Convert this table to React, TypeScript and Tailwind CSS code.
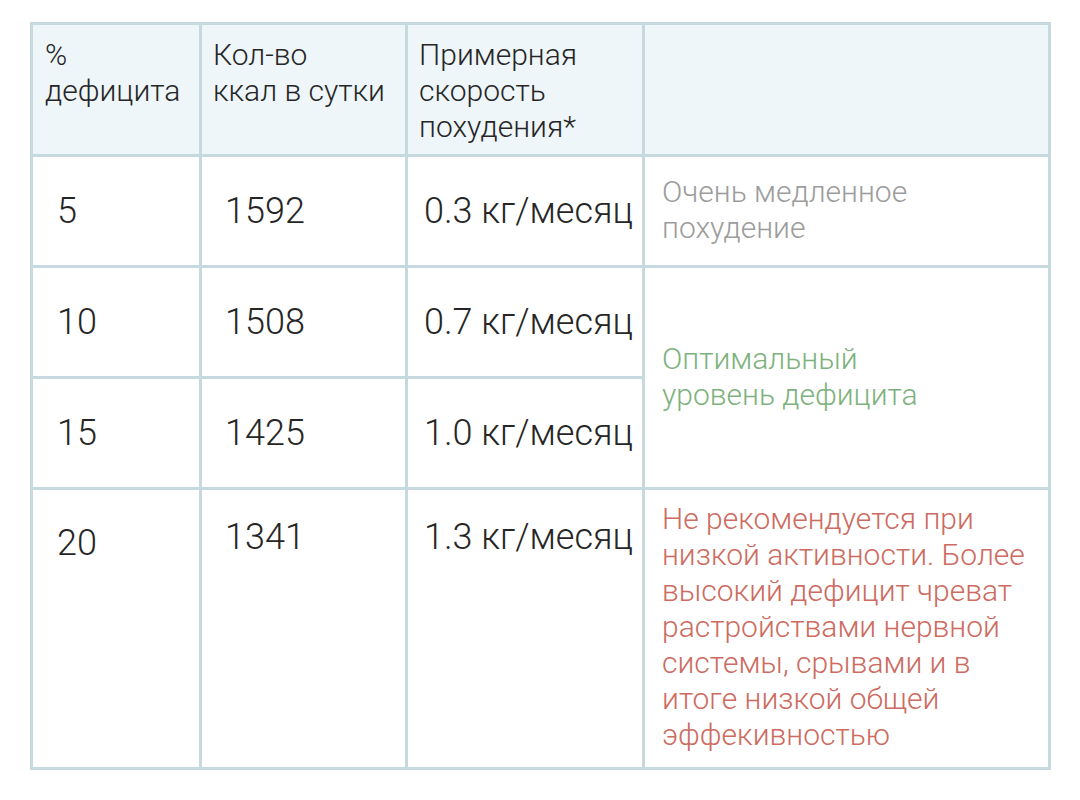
const rows = [
  { pct: "5", kcal: "1592", speed: "0.3 кг/месяц" },
  { pct: "10", kcal: "1508", speed: "0.7 кг/месяц" },
  { pct: "15", kcal: "1425", speed: "1.0 кг/месяц" },
];

const line = "border-[3px] border-[#c6d9df]";

export default function App() {
  return (
    <div className="min-h-[800px] w-[1080px] bg-white pt-[22px] pl-[30px] font-['Roboto',sans-serif] font-light text-[#262626]">
      <table className={`table-fixed w-[1018px] border-collapse ${line}`}>
        <colgroup>
          <col className="w-[169px]" />
          <col className="w-[206px]" />
          <col className="w-[237px]" />
          <col className="w-[406px]" />
        </colgroup>
        <thead>
          <tr className="h-[132px] bg-[#eef6fa] align-top text-left text-[30px] leading-[36px] font-light">
            <th className="border-x-[3px] border-[#c6d9df] pl-[12px] pt-[12px] font-light">
              %<br />дефицита
            </th>
            <th className="border-x-[3px] border-[#c6d9df] pl-[11px] pt-[12px] font-light">
              Кол-во<br />ккал в сутки
            </th>
            <th className="border-x-[3px] border-[#c6d9df] pl-[11px] pt-[12px] font-light">
              Примерная<br />скорость<br />похудения*
            </th>
            <th className="border-x-[3px] border-[#c6d9df]"></th>
          </tr>
        </thead>
        <tbody className="text-[36px] leading-[40px]">
          {rows.map((r, i) => (
            <tr key={r.pct} className="h-[111px] align-middle">
              <td className={`${line} pl-[24px]`}>{r.pct}</td>
              <td className={`${line} pl-[23px]`}>{r.kcal}</td>
              <td className={`${line} pl-[16px] whitespace-nowrap`}>{r.speed}</td>
              {i === 0 && (
                <td className={`${line} pl-[17px] text-[30px] leading-[36px] text-[#9c9c9c]`}>
                  <div className="-mt-[2px]">Очень медленное<br />похудение</div>
                </td>
              )}
              {i === 1 && (
                <td rowSpan={2} className={`${line} pl-[17px] text-[30px] leading-[36px] text-[#7db27d]`}>
                  <div className="-mt-[2px]">Оптимальный<br />уровень дефицита</div>
                </td>
              )}
            </tr>
          ))}
          <tr className="h-[280px] align-top">
            <td className={`${line} pl-[24px] pt-[33px]`}>20</td>
            <td className={`${line} pl-[23px] pt-[27px]`}>1341</td>
            <td className={`${line} pl-[16px] pt-[27px] whitespace-nowrap`}>1.3 кг/месяц</td>
            <td className={`${line} pl-[17px] pt-[11px] text-[30px] leading-[36px] text-[#cd6b60]`}>
              Не рекомендуется при низкой активности. Более высокий дефицит чреват растройствами нервной системы, срывами и в итоге низкой общей эффекивностью
            </td>
          </tr>
        </tbody>
      </table>
    </div>
  );
}
